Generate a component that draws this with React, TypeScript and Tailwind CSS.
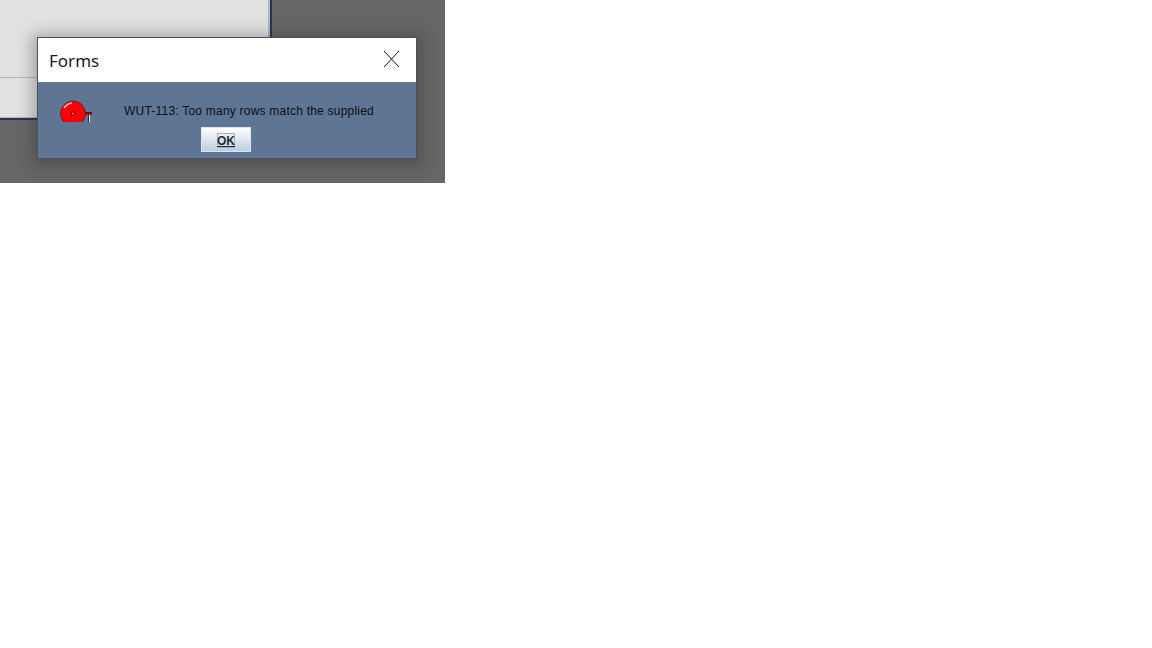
export default function App() {
  return (
    <div className="relative w-[445px] h-[183px] bg-[#666666] overflow-hidden">
      <div className="absolute left-0 top-0 w-[272px] h-[120px] bg-[#e1e1e1] border-r-2 border-b-2 border-[#2f3446]">
        <div className="h-full border-r-2 border-b border-[#a9b7cf] flex flex-col">
          <div className="h-[78px] border-b border-[#aeb8cc]" />
        </div>
      </div>
      <div className="absolute left-[37px] top-[37px] w-[380px] h-[122px] border border-[#4a4f58] flex flex-col shadow-[0_2px_14px_5px_rgba(40,40,40,0.32)]">
        <div className="h-[44px] bg-white flex items-center justify-between pl-[11px] pr-[16px]">
          <span className="text-[17px] text-[#1a1a1a] font-['Noto_Sans',sans-serif] leading-none">Forms</span>
          <svg width="18" height="18" viewBox="0 0 18 18" className="relative -top-[1px]">
            <path d="M2 1L17 17M17 1L2 17" stroke="#111" strokeWidth="1" fill="none" />
          </svg>
        </div>
        <div className="flex-1 bg-[#5f7594] flex flex-col relative">
          <svg width="36" height="26" viewBox="0 0 36 26" className="absolute left-[21px] top-[18px]" shapeRendering="crispEdges">
            <defs>
              <clipPath id="bellClip"><rect x="0" y="0" width="36" height="22" /></clipPath>
            </defs>
            <g clipPath="url(#bellClip)" shapeRendering="auto">
              <circle cx="14" cy="13.5" r="12.5" fill="#ff0000" stroke="#5a2a2a" strokeWidth="1" />
              <path d="M5 8Q8 3.5 13 3" stroke="#ffc0c0" strokeWidth="1.5" fill="none" />
              <circle cx="14" cy="13.5" r="2" fill="#d00000" stroke="#700000" strokeWidth="0.8" />
              <circle cx="14" cy="13.5" r="0.8" fill="#ffc0c0" />
            </g>
            <rect x="26" y="12" width="7" height="1" fill="#441111" />
            <rect x="26" y="13" width="7" height="2" fill="#b30000" />
            <rect x="29" y="15" width="1" height="7" fill="#222222" />
            <rect x="30" y="15" width="1" height="7" fill="#ffffff" />
          </svg>
          <div className="h-[45px] pl-[86px] flex items-center pt-[12px]">
            <span className="text-[12px] text-[#0d0f14] font-['Liberation_Sans',sans-serif] leading-none tracking-[0.22px] whitespace-nowrap">WUT-113: Too many rows match the supplied</span>
          </div>
          <div className="flex justify-center pr-[2px]">
            <button className="w-[50px] h-[25px] border border-[#dfe5ee] bg-gradient-to-b from-[#ffffff] to-[#bccde2] flex items-center justify-center">
              <span className="border border-[#9fb0c6] h-[15px] w-[18px] relative top-[1px] flex items-center justify-center text-[12px] font-bold underline text-[#2a2a2a] font-['Liberation_Sans',sans-serif] leading-none">OK</span>
            </button>
          </div>
        </div>
      </div>
    </div>
  );
}
